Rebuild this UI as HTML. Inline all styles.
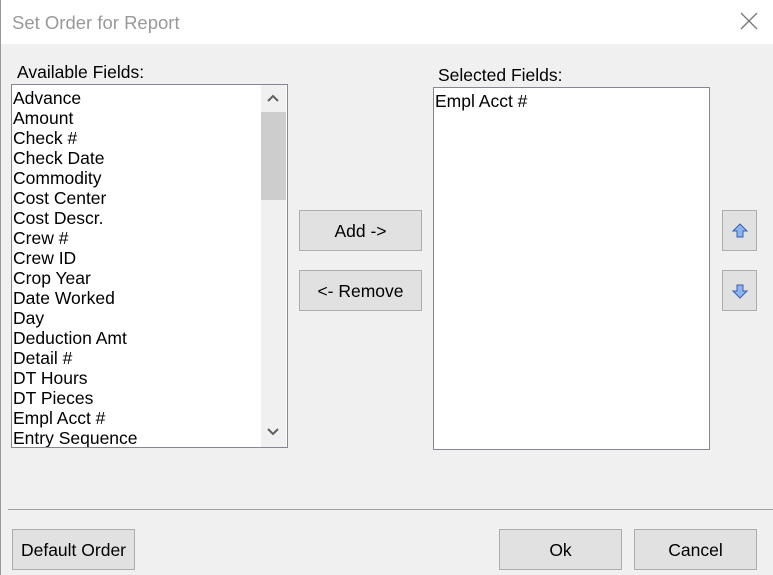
<!DOCTYPE html>
<html><head><style>
*{margin:0;padding:0;box-sizing:border-box}
body{width:773px;height:575px;background:#f0f0f0;font-family:"Liberation Sans",sans-serif;position:relative;overflow:hidden;color:#000}
.a{position:absolute}
.title{left:0;top:0;width:773px;height:44px;background:#fff}
.btn{position:absolute;background:#e1e1e1;border:1px solid #adadad;font-size:17.5px;display:flex;align-items:center;justify-content:center;padding-top:2px}
.list div{height:20px;line-height:20px;font-size:17.5px;padding-left:1px;white-space:nowrap}
</style></head><body>
<div class="a title"></div>
<div class="a" style="left:0;top:0;width:1px;height:575px;background:#999"></div>
<div class="a" style="left:12px;top:12px;font-size:18.5px;color:#999">Set Order for Report</div>
<div class="a" style="left:740px;top:12px;width:18px;height:18px">
<svg width="18" height="18"><path d="M1 1L17 17M17 1L1 17" stroke="#777" stroke-width="1.3"/></svg></div>
<div class="a" style="left:17px;top:62px;font-size:17.5px">Available Fields:</div>
<div class="a" style="left:438px;top:65px;font-size:17.5px">Selected Fields:</div>
<div class="a list" style="left:11px;top:84px;width:277px;height:364px;background:#fff;border:1px solid #828790;overflow:hidden">
<div style="margin-top:3px">Advance</div><div>Amount</div><div>Check #</div><div>Check Date</div><div>Commodity</div><div>Cost Center</div><div>Cost Descr.</div><div>Crew #</div><div>Crew ID</div><div>Crop Year</div><div>Date Worked</div><div>Day</div><div>Deduction Amt</div><div>Detail #</div><div>DT Hours</div><div>DT Pieces</div><div>Empl Acct #</div><div>Entry Sequence</div>
<div class="a" style="left:249px;top:0;width:25px;height:362px;background:#f0f0f0;padding:0"></div>
<div class="a" style="left:249px;top:27px;width:25px;height:88px;background:#cdcdcd;padding:0"></div>
<svg class="a" style="left:254px;top:8px" width="14" height="10"><path d="M2 8L7 3L12 8" stroke="#606060" stroke-width="2" fill="none"/></svg>
<svg class="a" style="left:254px;top:342px" width="14" height="10"><path d="M2 2L7 7L12 2" stroke="#606060" stroke-width="2" fill="none"/></svg>
</div>
<div class="a list" style="left:433px;top:87px;width:277px;height:363px;background:#fff;border:1px solid #828790">
<div style="margin-top:3px">Empl Acct #</div></div>
<div class="btn" style="left:299px;top:210px;width:123px;height:41px">Add -&gt;</div>
<div class="btn" style="left:299px;top:270px;width:123px;height:41px">&lt;- Remove</div>
<div class="btn" style="left:722px;top:210px;width:35px;height:41px;padding:0">
<svg width="16" height="16"><path d="M8 1L15 8H11V14H5V8H1Z" fill="#8ab4f0" stroke="#3a5fb0"/></svg></div>
<div class="btn" style="left:722px;top:270px;width:35px;height:41px;padding:0">
<svg width="16" height="16"><path d="M8 15L15 8H11V2H5V8H1Z" fill="#8ab4f0" stroke="#3a5fb0"/></svg></div>
<div class="a" style="left:8px;top:509px;width:765px;height:1px;background:#a0a0a0"></div>
<div class="btn" style="left:12px;top:529px;width:123px;height:41px">Default Order</div>
<div class="btn" style="left:499px;top:529px;width:123px;height:41px">Ok</div>
<div class="btn" style="left:634px;top:529px;width:123px;height:41px">Cancel</div>
</body></html>
